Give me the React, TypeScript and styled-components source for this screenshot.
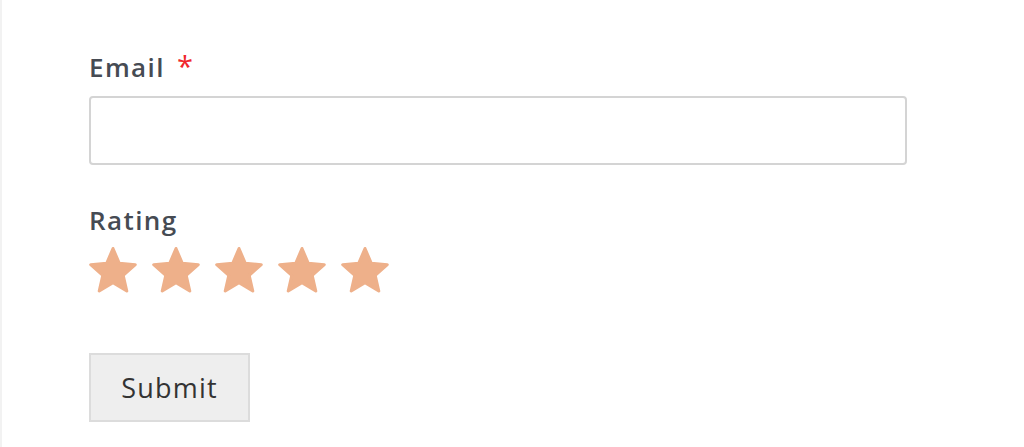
import React from 'react'
import styled, { createGlobalStyle } from 'styled-components'

const GlobalStyle = createGlobalStyle`
  html, body {
    margin: 0;
    padding: 0;
    background: #ffffff;
  }
  body {
    font-family: 'Open Sans', 'Liberation Sans', sans-serif;
  }
`

const STAR_COLOR = '#eeb08a'

// rounded five point star, filling its 48px box
const Star = () => (
  <svg width='48' height='48' viewBox='0 0 48 48' aria-hidden='true'>
    <polygon
      points='24,2.5 30.3,17.3 46.3,18.7 34.2,29.3 37.8,45 24,36.7 10.2,45 13.8,29.3 1.7,18.7 17.7,17.3'
      fill={STAR_COLOR}
      stroke={STAR_COLOR}
      strokeWidth='3'
      strokeLinejoin='round'
    />
  </svg>
)

const App = () => {
  return (
    <>
      <GlobalStyle />
      <Page>
        <Form onSubmit={(e) => e.preventDefault()}>
          <Field>
            <Label htmlFor='email'>
              Email<Required>*</Required>
            </Label>
            <Input id='email' type='email' />
          </Field>

          <Field>
            <Label as='div'>Rating</Label>
            <Stars>
              {[1, 2, 3, 4, 5].map((n) => (
                <StarButton key={n} type='button' aria-label={`${n} stars`}>
                  <Star />
                </StarButton>
              ))}
            </Stars>
          </Field>

          <SubmitButton type='submit'>Submit</SubmitButton>
        </Form>
      </Page>
    </>
  )
}

export default App

const Page = styled.div`
  min-height: 447px;
  box-sizing: border-box;
  border-left: 2px solid #f2f2f2;
  padding: 50px 0 0 87px;
`

const Form = styled.form`
  display: flex;
  flex-direction: column;
  align-items: flex-start;
  width: 818px;
`

const Field = styled.div`
  display: flex;
  flex-direction: column;
  width: 100%;
  margin-bottom: 38px;
`

const Label = styled.label`
  color: #464b53;
  font-size: 26px;
  font-weight: 600;
  letter-spacing: 1.4px;
  line-height: 34px;
  margin-bottom: 12px;
`

const Required = styled.span`
  color: #f0262c;
  font-size: 29px;
  font-weight: 400;
  letter-spacing: 0;
  line-height: 0;
  margin-left: 12px;
`

const Input = styled.input`
  box-sizing: border-box;
  width: 100%;
  height: 69px;
  border: 2px solid #d4d4d4;
  border-radius: 4px;
  background: #fff;
  padding: 0 14px;
  font-size: 22px;
  outline: none;
`

const Stars = styled.div`
  display: flex;
  gap: 15px;
  margin-top: -3px;
`

const StarButton = styled.button`
  border: 0;
  padding: 0;
  background: transparent;
  width: 48px;
  height: 48px;
  cursor: pointer;
  display: flex;
`

const SubmitButton = styled.button`
  box-sizing: border-box;
  margin-top: 21px;
  width: 161px;
  height: 69px;
  background: #eeeeee;
  border: 2px solid #dcdcdc;
  border-radius: 0;
  color: #333333;
  font-family: 'Open Sans', 'Liberation Sans', sans-serif;
  font-size: 27px;
  font-weight: 400;
  letter-spacing: 1.2px;
  cursor: pointer;
`
